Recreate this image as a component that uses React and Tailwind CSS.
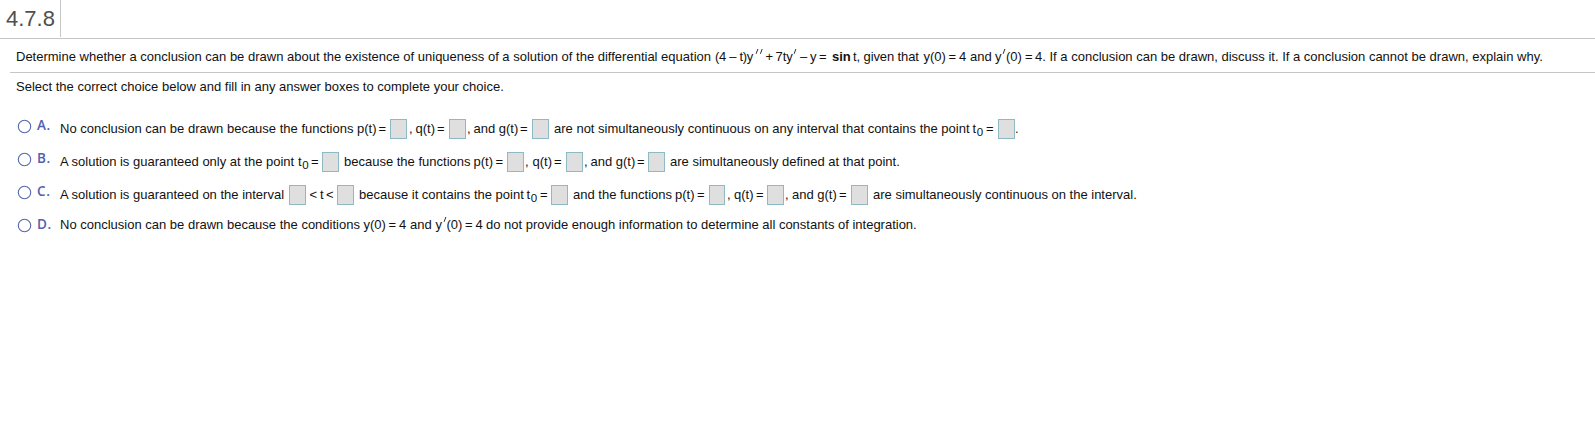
function S({ w, children, className = "" }) {
  return <span className={`block shrink-0 whitespace-pre ${w} ${className}`}>{children}</span>;
}

function Box({ w = "w-[17px]" }) {
  return <span className={`block h-5 shrink-0 border border-[#8dbac4] bg-[#dfdfdf] ${w}`} />;
}

function Prime({ w = "w-[5px]", double = false }) {
  return (
    <span className={`block shrink-0 ${w}`}>
      <svg width={double ? 9 : 5} height="8" viewBox={double ? "0 0 9 8" : "0 0 5 8"} className="mt-px overflow-visible" fill="none" stroke="#222" strokeWidth="0.95">
        <path d="M2.9 1 L1.1 5.8" />
        {double && <path d="M7.2 1 L5.4 5.8" />}
      </svg>
    </span>
  );
}

function T0({ w = "w-[14px]" }) {
  return (
    <span className={`flex shrink-0 ${w}`}>
      <span>t</span>
      <span className="mt-[3px] ml-[0.5px] text-[11.5px]">0</span>
    </span>
  );
}

function Choice({ letter, children }) {
  return (
    <div className="flex h-[33px] pl-[17px]">
      <svg width="15" height="15" viewBox="0 0 15 15" className="-mt-[0.5px] shrink-0" fill="#fff" stroke="#5565ae" strokeWidth="1.1">
        <circle cx="7.5" cy="7.5" r="6.2" />
      </svg>
      <span className="-mt-px ml-[5px] block w-[23px] shrink-0 font-['Open_Sans',sans-serif] text-[13.5px] leading-[15px] font-semibold tracking-[0.6px] text-[#5260b0]">
        {letter}.
      </span>
      <div className="flex h-5">{children}</div>
    </div>
  );
}

export default function App() {
  return (
    <div className="h-[425px] w-full overflow-hidden bg-white font-['Liberation_Sans',Arial,sans-serif] text-[13px] leading-5 text-[#111]">
      <header className="flex h-[39px] border-b border-[#c6c6c6]">
        <div className="h-[37px] w-[61px] border-r border-[#c6c6c6] pl-[6px] text-[22px] leading-[37px] text-[#505050]">4.7.8</div>
      </header>

      <div className="ml-[10px] flex h-[34px] border-b border-[#c6c6c6] pt-[8px] pl-[6px]">
        <S w="w-[699px]">Determine whether a conclusion can be drawn about the existence of uniqueness of a solution of the differential equation</S>
        <S w="w-[40px]" className="tracking-[-0.3px]">(4 – t)y</S>
        <Prime w="w-[10.5px]" double />
        <S w="w-[10px]">+</S>
        <S w="w-[17px]">7ty</S>
        <Prime w="w-[7.5px]" />
        <S w="w-[10px]">–</S>
        <S w="w-[9px]">y</S>
        <S w="w-[13px]">=</S>
        <S w="w-[21px]" className="font-bold">sin</S>
        <S w="w-[10.5px]">t,</S>
        <S w="w-[60px]" className="tracking-[-0.1px]">given that</S>
        <S w="w-[25px]">y(0)</S>
        <S w="w-[10.5px]">=</S>
        <S w="w-[11px]">4</S>
        <S w="w-[25px]">and</S>
        <S w="w-[7px]">y</S>
        <Prime w="w-[4px]" />
        <S w="w-[19px]">(0)</S>
        <S w="w-[10px]">=</S>
        <S w="w-[14.5px]">4.</S>
        <S w="w-[494px]">If a conclusion can be drawn, discuss it. If a conclusion cannot be drawn, explain why.</S>
      </div>

      <p className="h-[46px] pt-[4px] pl-[16px]">Select the correct choice below and fill in any answer boxes to complete your choice.</p>

      <Choice letter="A">
        <S w="w-[297px]">No conclusion can be drawn because the functions</S>
        <S w="w-[21.5px]">p(t)</S>
        <S w="w-[11.5px]">=</S>
        <Box />
        <S w="w-[8.5px]" className="pl-[2px]">,</S>
        <S w="w-[21.5px]">q(t)</S>
        <S w="w-[12px]">=</S>
        <Box />
        <S w="w-[7.5px]" className="pl-px">,</S>
        <S w="w-[46.5px]">and g(t)</S>
        <S w="w-[12px]">=</S>
        <Box />
        <S w="w-[423.5px]" className="pl-[5px]">are not simultaneously continuous on any interval that contains the point</S>
        <T0 w="w-[13.5px]" />
        <S w="w-[12px]">=</S>
        <Box />
        <S w="w-[8px]">.</S>
      </Choice>

      <Choice letter="B">
        <S w="w-[238px]">A solution is guaranteed only at the point</S>
        <T0 w="w-[13px]" />
        <S w="w-[11px]">=</S>
        <Box />
        <S w="w-[134.5px]" className="pl-[5px]">because the functions</S>
        <S w="w-[22px]">p(t)</S>
        <S w="w-[11.5px]">=</S>
        <Box />
        <S w="w-[8.5px]" className="pl-px">,</S>
        <S w="w-[21.5px]">q(t)</S>
        <S w="w-[12px]">=</S>
        <Box />
        <S w="w-[7.5px]" className="pl-px">,</S>
        <S w="w-[46.5px]">and g(t)</S>
        <S w="w-[11px]">=</S>
        <Box />
        <S w="w-[240px]" className="pl-[5px]">are simultaneously defined at that point.</S>
      </Choice>

      <Choice letter="C">
        <S w="w-[229px]">A solution is guaranteed on the interval</S>
        <Box />
        <S w="w-[14px]" className="pl-[3.5px]">&lt;</S>
        <S w="w-[6px]">t</S>
        <S w="w-[11px]">&lt;</S>
        <Box />
        <S w="w-[172.5px]" className="pl-[5px]">because it contains the point</S>
        <T0 w="w-[13.5px]" />
        <S w="w-[11px]">=</S>
        <Box />
        <S w="w-[107px]" className="pl-[5px]">and the functions</S>
        <S w="w-[22px]">p(t)</S>
        <S w="w-[12px]">=</S>
        <Box w="w-[16px]" />
        <S w="w-[9px]" className="pl-[2px]">,</S>
        <S w="w-[22px]">q(t)</S>
        <S w="w-[11px]">=</S>
        <Box />
        <S w="w-[8px]" className="pl-px">,</S>
        <S w="w-[47px]">and g(t)</S>
        <S w="w-[12px]">=</S>
        <Box />
        <S w="w-[280px]" className="pl-[5px]">are simultaneously continuous on the interval.</S>
      </Choice>

      <Choice letter="D">
        <div className="-mt-[3px] flex">
          <S w="w-[303.5px]">No conclusion can be drawn because the conditions</S>
          <S w="w-[25px]">y(0)</S>
          <S w="w-[10.5px]">=</S>
          <S w="w-[11px]">4</S>
          <S w="w-[25.5px]">and</S>
          <S w="w-[7px]">y</S>
          <Prime w="w-[4px]" />
          <S w="w-[18.5px]">(0)</S>
          <S w="w-[10.5px]">=</S>
          <S w="w-[10.5px]">4</S>
          <S w="w-[440px]" className="tracking-[-0.01px]">do not provide enough information to determine all constants of integration.</S>
        </div>
      </Choice>
    </div>
  );
}
